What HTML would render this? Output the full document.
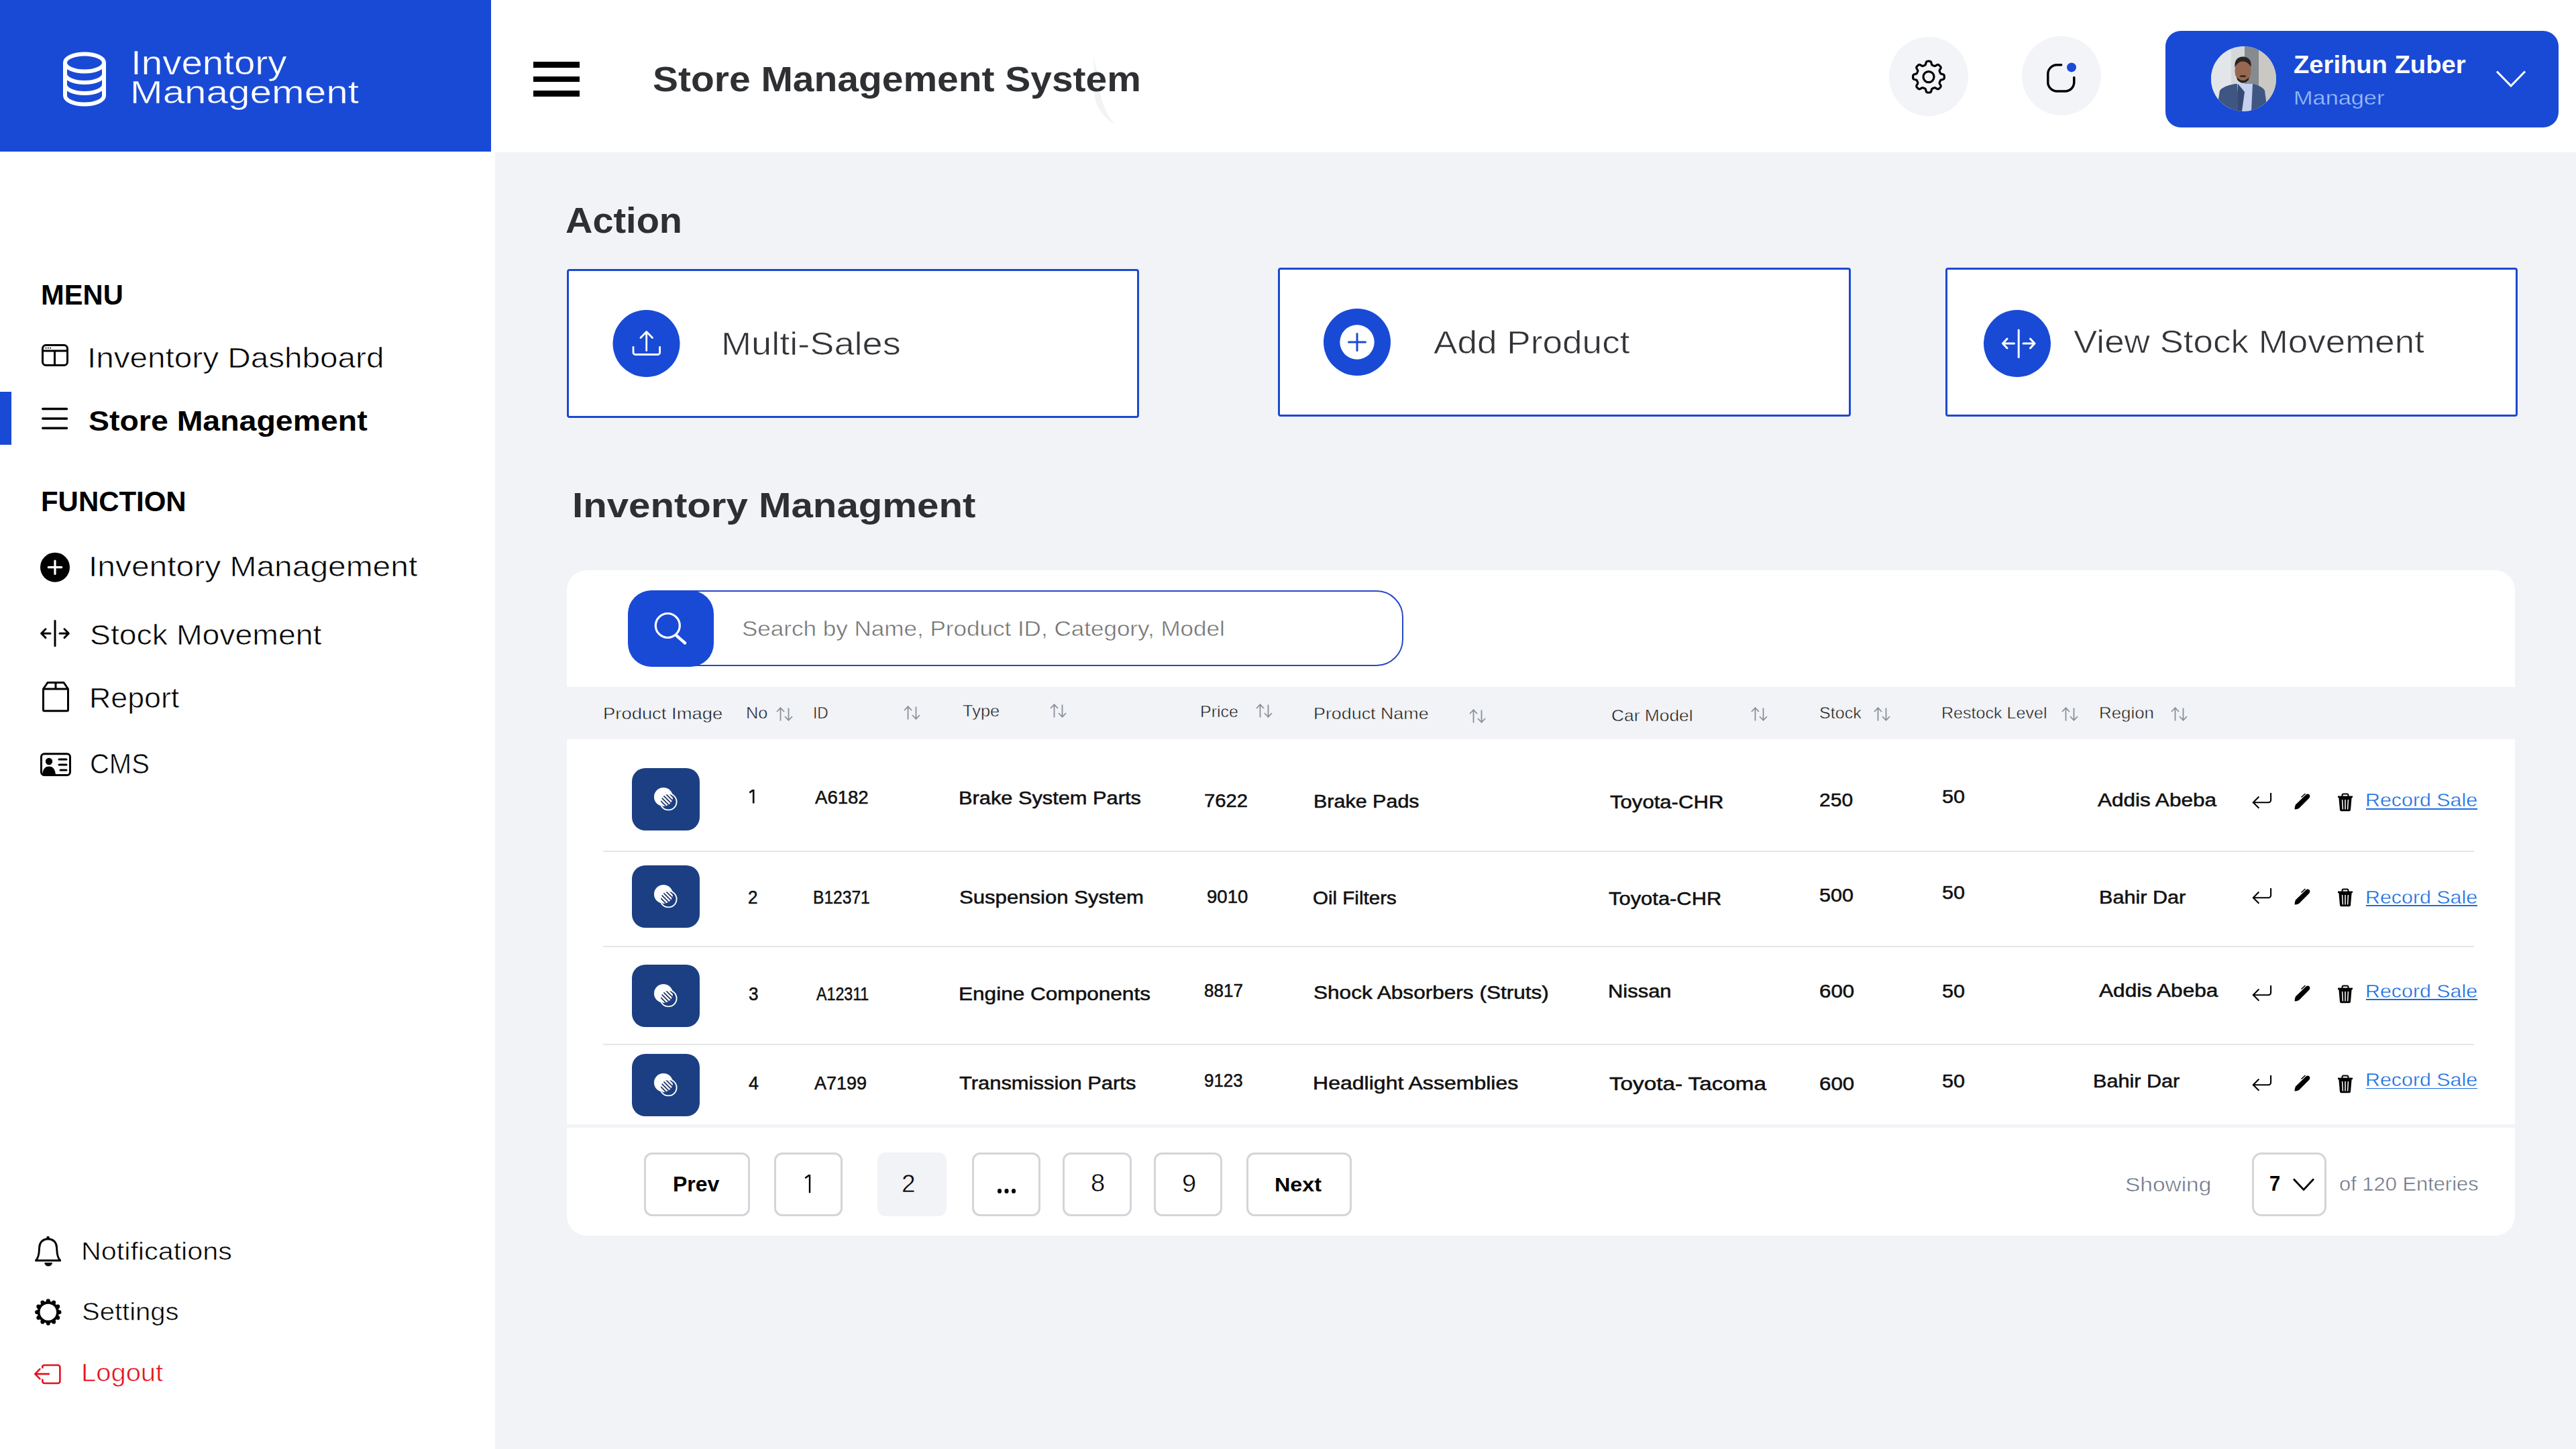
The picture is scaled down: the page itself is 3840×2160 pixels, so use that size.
<!DOCTYPE html>
<html><head><meta charset="utf-8"><title>Store Management System</title>
<style>
html,body{margin:0;padding:0;width:3840px;height:2160px;overflow:hidden;background:#fff;position:relative}
.r{position:absolute}
.t{position:absolute;z-index:2;white-space:pre;font-family:"Liberation Sans",sans-serif;transform-origin:0 0}
</style></head><body>
<div class="r" style="left:738px;top:227px;width:3102px;height:1933px;background:#f1f3f7"></div>
<div class="r" style="left:0;top:0;width:732px;height:226px;background:#194ad6"></div>
<svg class="r" style="left:90px;top:74px" width="72" height="88" viewBox="0 0 72 88">
<g fill="none" stroke="#fff" stroke-width="6">
<ellipse cx="36" cy="19.5" rx="29" ry="13"/>
<path d="M7 19.5 V68.5 A29 13 0 0 0 65 68.5 V19.5"/>
<path d="M7 36 A29 13 0 0 0 65 36"/>
<path d="M7 52 A29 13 0 0 0 65 52"/>
</g></svg>
<div class="t" style="left:194.56px;top:70.49px;font-size:49.75px;line-height:49.75px;color:#fff;transform:scaleX(1.1358);-webkit-text-stroke:0.5px #194ad6;">Inventory</div>
<div class="t" style="left:194.31px;top:113.23px;font-size:48.75px;line-height:48.75px;color:#fff;transform:scaleX(1.1979);-webkit-text-stroke:0.5px #194ad6;">Management</div>
<div class="r" style="left:795px;top:92px;width:69px;height:8.5px;background:#000"></div>
<div class="r" style="left:795px;top:113.5px;width:69px;height:8.5px;background:#000"></div>
<div class="r" style="left:795px;top:135px;width:69px;height:8.5px;background:#000"></div>
<div class="t" style="left:972.51px;top:92.47px;font-size:52.25px;line-height:52.25px;font-weight:700;color:#2e3033;transform:scaleX(1.0899);">Store Management System</div>
<div class="r" style="left:2816px;top:55px;width:118px;height:118px;border-radius:50%;background:#f2f4f7"></div>
<div class="r" style="left:3013.5px;top:53.5px;width:118px;height:118px;border-radius:50%;background:#f2f4f7"></div>
<svg class="r" style="left:2845px;top:85px" width="60" height="60" viewBox="0 0 60 60">
<path d="M53.40 29.60 L53.40 29.91 L53.39 30.21 L53.37 30.52 L53.34 30.82 L53.30 31.13 L53.25 31.43 L53.17 31.73 L53.07 32.02 L52.93 32.31 L52.74 32.59 L52.47 32.86 L52.10 33.10 L51.62 33.32 L51.04 33.50 L50.40 33.66 L49.76 33.80 L49.17 33.94 L48.69 34.09 L48.32 34.25 L48.03 34.43 L47.81 34.62 L47.64 34.83 L47.51 35.04 L47.39 35.25 L47.28 35.47 L47.18 35.69 L47.09 35.90 L47.00 36.12 L46.91 36.34 L46.81 36.56 L46.72 36.78 L46.63 37.01 L46.54 37.23 L46.45 37.45 L46.37 37.67 L46.29 37.90 L46.22 38.13 L46.17 38.38 L46.15 38.64 L46.17 38.93 L46.24 39.26 L46.39 39.64 L46.63 40.09 L46.94 40.60 L47.29 41.16 L47.64 41.72 L47.92 42.26 L48.10 42.75 L48.19 43.18 L48.19 43.56 L48.13 43.90 L48.03 44.20 L47.89 44.48 L47.73 44.74 L47.55 45.00 L47.37 45.24 L47.17 45.47 L46.97 45.70 L46.76 45.93 L46.55 46.15 L46.33 46.36 L46.10 46.57 L45.87 46.77 L45.64 46.97 L45.40 47.15 L45.14 47.33 L44.88 47.49 L44.60 47.63 L44.30 47.73 L43.96 47.79 L43.58 47.79 L43.15 47.70 L42.66 47.52 L42.12 47.24 L41.56 46.89 L41.00 46.54 L40.49 46.23 L40.04 45.99 L39.66 45.84 L39.33 45.77 L39.04 45.75 L38.78 45.77 L38.53 45.82 L38.30 45.89 L38.07 45.97 L37.85 46.05 L37.63 46.14 L37.41 46.23 L37.18 46.32 L36.96 46.41 L36.74 46.51 L36.52 46.60 L36.30 46.69 L36.09 46.78 L35.87 46.88 L35.65 46.99 L35.44 47.11 L35.23 47.24 L35.02 47.41 L34.83 47.63 L34.65 47.92 L34.49 48.29 L34.34 48.77 L34.20 49.36 L34.06 50.00 L33.90 50.64 L33.72 51.22 L33.50 51.70 L33.26 52.07 L32.99 52.34 L32.71 52.53 L32.42 52.67 L32.13 52.77 L31.83 52.85 L31.53 52.90 L31.22 52.94 L30.92 52.97 L30.61 52.99 L30.31 53.00 L30.00 53.00 L29.69 53.00 L29.39 52.99 L29.08 52.97 L28.78 52.94 L28.47 52.90 L28.17 52.85 L27.87 52.77 L27.58 52.67 L27.29 52.53 L27.01 52.34 L26.74 52.07 L26.50 51.70 L26.28 51.22 L26.10 50.64 L25.94 50.00 L25.80 49.36 L25.66 48.77 L25.51 48.29 L25.35 47.92 L25.17 47.63 L24.98 47.41 L24.77 47.24 L24.56 47.11 L24.35 46.99 L24.13 46.88 L23.91 46.78 L23.70 46.69 L23.48 46.60 L23.26 46.51 L23.04 46.41 L22.82 46.32 L22.59 46.23 L22.37 46.14 L22.15 46.05 L21.93 45.97 L21.70 45.89 L21.47 45.82 L21.22 45.77 L20.96 45.75 L20.67 45.77 L20.34 45.84 L19.96 45.99 L19.51 46.23 L19.00 46.54 L18.44 46.89 L17.88 47.24 L17.34 47.52 L16.85 47.70 L16.42 47.79 L16.04 47.79 L15.70 47.73 L15.40 47.63 L15.12 47.49 L14.86 47.33 L14.60 47.15 L14.36 46.97 L14.13 46.77 L13.90 46.57 L13.67 46.36 L13.45 46.15 L13.24 45.93 L13.03 45.70 L12.83 45.47 L12.63 45.24 L12.45 45.00 L12.27 44.74 L12.11 44.48 L11.97 44.20 L11.87 43.90 L11.81 43.56 L11.81 43.18 L11.90 42.75 L12.08 42.26 L12.36 41.72 L12.71 41.16 L13.06 40.60 L13.37 40.09 L13.61 39.64 L13.76 39.26 L13.83 38.93 L13.85 38.64 L13.83 38.38 L13.78 38.13 L13.71 37.90 L13.63 37.67 L13.55 37.45 L13.46 37.23 L13.37 37.01 L13.28 36.78 L13.19 36.56 L13.09 36.34 L13.00 36.12 L12.91 35.90 L12.82 35.69 L12.72 35.47 L12.61 35.25 L12.49 35.04 L12.36 34.83 L12.19 34.62 L11.97 34.43 L11.68 34.25 L11.31 34.09 L10.83 33.94 L10.24 33.80 L9.60 33.66 L8.96 33.50 L8.38 33.32 L7.90 33.10 L7.53 32.86 L7.26 32.59 L7.07 32.31 L6.93 32.02 L6.83 31.73 L6.75 31.43 L6.70 31.13 L6.66 30.82 L6.63 30.52 L6.61 30.21 L6.60 29.91 L6.60 29.60 L6.60 29.29 L6.61 28.99 L6.63 28.68 L6.66 28.38 L6.70 28.07 L6.75 27.77 L6.83 27.47 L6.93 27.18 L7.07 26.89 L7.26 26.61 L7.53 26.34 L7.90 26.10 L8.38 25.88 L8.96 25.70 L9.60 25.54 L10.24 25.40 L10.83 25.26 L11.31 25.11 L11.68 24.95 L11.97 24.77 L12.19 24.58 L12.36 24.37 L12.49 24.16 L12.61 23.95 L12.72 23.73 L12.82 23.51 L12.91 23.30 L13.00 23.08 L13.09 22.86 L13.19 22.64 L13.28 22.42 L13.37 22.19 L13.46 21.97 L13.55 21.75 L13.63 21.53 L13.71 21.30 L13.78 21.07 L13.83 20.82 L13.85 20.56 L13.83 20.27 L13.76 19.94 L13.61 19.56 L13.37 19.11 L13.06 18.60 L12.71 18.04 L12.36 17.48 L12.08 16.94 L11.90 16.45 L11.81 16.02 L11.81 15.64 L11.87 15.30 L11.97 15.00 L12.11 14.72 L12.27 14.46 L12.45 14.20 L12.63 13.96 L12.83 13.73 L13.03 13.50 L13.24 13.27 L13.45 13.05 L13.67 12.84 L13.90 12.63 L14.13 12.43 L14.36 12.23 L14.60 12.05 L14.86 11.87 L15.12 11.71 L15.40 11.57 L15.70 11.47 L16.04 11.41 L16.42 11.41 L16.85 11.50 L17.34 11.68 L17.88 11.96 L18.44 12.31 L19.00 12.66 L19.51 12.97 L19.96 13.21 L20.34 13.36 L20.67 13.43 L20.96 13.45 L21.22 13.43 L21.47 13.38 L21.70 13.31 L21.93 13.23 L22.15 13.15 L22.37 13.06 L22.59 12.97 L22.82 12.88 L23.04 12.79 L23.26 12.69 L23.48 12.60 L23.70 12.51 L23.91 12.42 L24.13 12.32 L24.35 12.21 L24.56 12.09 L24.77 11.96 L24.98 11.79 L25.17 11.57 L25.35 11.28 L25.51 10.91 L25.66 10.43 L25.80 9.84 L25.94 9.20 L26.10 8.56 L26.28 7.98 L26.50 7.50 L26.74 7.13 L27.01 6.86 L27.29 6.67 L27.58 6.53 L27.87 6.43 L28.17 6.35 L28.47 6.30 L28.78 6.26 L29.08 6.23 L29.39 6.21 L29.69 6.20 L30.00 6.20 L30.31 6.20 L30.61 6.21 L30.92 6.23 L31.22 6.26 L31.53 6.30 L31.83 6.35 L32.13 6.43 L32.42 6.53 L32.71 6.67 L32.99 6.86 L33.26 7.13 L33.50 7.50 L33.72 7.98 L33.90 8.56 L34.06 9.20 L34.20 9.84 L34.34 10.43 L34.49 10.91 L34.65 11.28 L34.83 11.57 L35.02 11.79 L35.23 11.96 L35.44 12.09 L35.65 12.21 L35.87 12.32 L36.09 12.42 L36.30 12.51 L36.52 12.60 L36.74 12.69 L36.96 12.79 L37.18 12.88 L37.41 12.97 L37.63 13.06 L37.85 13.15 L38.07 13.23 L38.30 13.31 L38.53 13.38 L38.78 13.43 L39.04 13.45 L39.33 13.43 L39.66 13.36 L40.04 13.21 L40.49 12.97 L41.00 12.66 L41.56 12.31 L42.12 11.96 L42.66 11.68 L43.15 11.50 L43.58 11.41 L43.96 11.41 L44.30 11.47 L44.60 11.57 L44.88 11.71 L45.14 11.87 L45.40 12.05 L45.64 12.23 L45.87 12.43 L46.10 12.63 L46.33 12.84 L46.55 13.05 L46.76 13.27 L46.97 13.50 L47.17 13.73 L47.37 13.96 L47.55 14.20 L47.73 14.46 L47.89 14.72 L48.03 15.00 L48.13 15.30 L48.19 15.64 L48.19 16.02 L48.10 16.45 L47.92 16.94 L47.64 17.48 L47.29 18.04 L46.94 18.60 L46.63 19.11 L46.39 19.56 L46.24 19.94 L46.17 20.27 L46.15 20.56 L46.17 20.82 L46.22 21.07 L46.29 21.30 L46.37 21.53 L46.45 21.75 L46.54 21.97 L46.63 22.19 L46.72 22.42 L46.81 22.64 L46.91 22.86 L47.00 23.08 L47.09 23.30 L47.18 23.51 L47.28 23.73 L47.39 23.95 L47.51 24.16 L47.64 24.37 L47.81 24.58 L48.03 24.77 L48.32 24.95 L48.69 25.11 L49.17 25.26 L49.76 25.40 L50.40 25.54 L51.04 25.70 L51.62 25.88 L52.10 26.10 L52.47 26.34 L52.74 26.61 L52.93 26.89 L53.07 27.18 L53.17 27.47 L53.25 27.77 L53.30 28.07 L53.34 28.38 L53.37 28.68 L53.39 28.99 L53.40 29.29 Z" fill="none" stroke="#000" stroke-width="3.2" stroke-linejoin="round"/>
<circle cx="30" cy="29.6" r="8" fill="none" stroke="#000" stroke-width="3.2"/></svg>
<svg class="r" style="left:1620px;top:80px" width="60" height="115" viewBox="0 0 60 115">
<path d="M10 6 Q12 40 11 60 Q14 88 42 106 Q22 80 20 55 Q18 30 10 6 Z" fill="#eef0f3" opacity="0.8"/></svg>
<svg class="r" style="left:3045px;top:90px" width="60" height="55" viewBox="0 0 60 55">
<path d="M27.7 6.8 H21 A13.5 13.5 0 0 0 7.8 20.3 V32.5 A13.5 13.5 0 0 0 21.3 46 H33.6 A13.5 13.5 0 0 0 46.8 32.5 V25.5" fill="none" stroke="#000" stroke-width="3.5" stroke-linecap="round"/>
<circle cx="43" cy="10.4" r="7" fill="#1b4ad6"/></svg>
<div class="r" style="left:3228px;top:46px;width:586px;height:144px;border-radius:23px;background:#194ad6"></div>
<svg class="r" style="left:3296px;top:69px" width="97" height="97" viewBox="0 0 97 97">
<defs><clipPath id="av"><circle cx="48.5" cy="48.5" r="48.5"/></clipPath></defs>
<g clip-path="url(#av)">
<rect width="97" height="97" fill="#d3d8da"/>
<rect x="0" y="0" width="30" height="97" fill="#e2e6e8"/>
<rect x="50" y="0" width="21" height="97" fill="#858b90"/>
<rect x="71" y="0" width="26" height="97" fill="#c9c8c3"/>
<path d="M8 97 L13 66 Q18 59 36 56 L62 56 Q76 59 80 66 L84 97 Z" fill="#3f5682"/>
<path d="M39 56 L62 56 L60 97 L42 97 Z" fill="#c5d1ee"/>
<path d="M40 56 L50 68 L46 97 L40 97 Z" fill="#344a74"/>
<ellipse cx="47.5" cy="37" rx="12" ry="16" fill="#96684f"/>
<path d="M35.5 32 Q34 16 47.5 15.5 Q61 16 59.5 31 Q55 22.5 47 22.5 Q39.5 22.5 35.5 32 Z" fill="#2a2422"/>
<path d="M38.5 46 Q47.5 56 56.5 46 L56 50 Q47.5 59.5 39 50 Z" fill="#2a2422"/>
<ellipse cx="47.5" cy="44.5" rx="5" ry="1.6" fill="#3a2a24"/>
</g></svg>
<div class="t" style="left:3418.97px;top:77.58px;font-size:37.00px;line-height:37.00px;font-weight:700;color:#fff;transform:scaleX(1.0315);">Zerihun Zuber</div>
<div class="t" style="left:3418.61px;top:130.60px;font-size:30.00px;line-height:30.00px;color:#96bdf6;transform:scaleX(1.1431);-webkit-text-stroke:0.35px #194ad6;">Manager</div>
<svg class="r" style="left:3719px;top:103px" width="48" height="30" viewBox="0 0 48 30">
<path d="M3 3.5 L24 25 L45 3.5" fill="none" stroke="#fff" stroke-width="3"/></svg>
<div class="t" style="left:61.49px;top:417.50px;font-size:43.00px;line-height:43.00px;font-weight:700;color:#000;transform:scaleX(0.9702);">MENU</div>
<svg class="r" style="left:60px;top:511px" width="44" height="38" viewBox="0 0 44 38">
<rect x="3.5" y="3.5" width="37" height="30" rx="5" fill="none" stroke="#000" stroke-width="3"/>
<path d="M3.5 12 H40.5 M21.5 12 V33.5" stroke="#000" stroke-width="3"/>
<circle cx="8.5" cy="7.8" r="1" fill="#000"/><circle cx="11.8" cy="7.8" r="1" fill="#000"/><circle cx="15.1" cy="7.8" r="1" fill="#000"/>
</svg>
<div class="t" style="left:130.34px;top:512.01px;font-size:42.75px;line-height:42.75px;color:#000;transform:scaleX(1.1149);-webkit-text-stroke:0.7px #fff;">Inventory Dashboard</div>
<div class="r" style="left:0;top:584px;width:17px;height:79px;background:#194ad6"></div>
<svg class="r" style="left:58px;top:600px" width="48" height="48" viewBox="0 0 48 48">
<path d="M5.8 9.6 H41.5 M5.8 24 H41.5 M5.8 38.3 H41.5" stroke="#000" stroke-width="3.5" stroke-linecap="round"/></svg>
<div class="t" style="left:132.32px;top:605.50px;font-size:43.00px;line-height:43.00px;font-weight:700;color:#000;transform:scaleX(1.0804);">Store Management</div>
<div class="t" style="left:61.27px;top:725.90px;font-size:43.00px;line-height:43.00px;font-weight:700;color:#000;transform:scaleX(0.9751);">FUNCTION</div>
<svg class="r" style="left:58px;top:822px" width="48" height="48" viewBox="0 0 48 48">
<circle cx="24" cy="23.7" r="22" fill="#000"/>
<path d="M24 14 V33.5 M14.3 23.7 H33.7" stroke="#fff" stroke-width="3.2" stroke-linecap="round"/></svg>
<div class="t" style="left:131.54px;top:823.35px;font-size:43.00px;line-height:43.00px;color:#000;transform:scaleX(1.1147);-webkit-text-stroke:0.7px #fff;">Inventory Management</div>
<svg class="r" style="left:58px;top:922px" width="50" height="44" viewBox="0 0 50 44">
<path d="M24 3.5 V40.8" stroke="#000" stroke-width="3" stroke-linecap="round"/>
<path d="M17 22.2 H4 M10 15.8 L3.6 22.2 L10 28.6" fill="none" stroke="#000" stroke-width="3" stroke-linecap="round" stroke-linejoin="round"/>
<path d="M31 22.2 H44 M38 15.8 L44.4 22.2 L38 28.6" fill="none" stroke="#000" stroke-width="3" stroke-linecap="round" stroke-linejoin="round"/></svg>
<div class="t" style="left:133.84px;top:924.55px;font-size:43.00px;line-height:43.00px;color:#000;transform:scaleX(1.0786);-webkit-text-stroke:0.7px #fff;">Stock Movement</div>
<svg class="r" style="left:60px;top:1014px" width="46" height="50" viewBox="0 0 46 50">
<path d="M4.5 13 L11 3.5 H35 L41.5 13 V44.2 A1.5 1.5 0 0 1 40 45.7 H6 A1.5 1.5 0 0 1 4.5 44.2 Z M4.5 13 H41.5 M23 3.5 V13" fill="none" stroke="#000" stroke-width="3" stroke-linejoin="round"/></svg>
<div class="t" style="left:132.88px;top:1018.85px;font-size:43.00px;line-height:43.00px;color:#000;transform:scaleX(1.0397);-webkit-text-stroke:0.7px #fff;">Report</div>
<svg class="r" style="left:58px;top:1120px" width="50" height="40" viewBox="0 0 50 40">
<rect x="3.5" y="3.8" width="43" height="31.8" rx="4.5" fill="none" stroke="#000" stroke-width="3"/>
<circle cx="15" cy="15" r="5.2" fill="#000"/>
<path d="M5 35.6 Q6 22.5 15 22.5 Q24 22.5 25 35.6 Z" fill="#000"/>
<path d="M30 12 H41 M30 20 H41 M32 28 H41" stroke="#000" stroke-width="3" stroke-linecap="round"/></svg>
<div class="t" style="left:134.14px;top:1116.85px;font-size:43.00px;line-height:43.00px;color:#000;transform:scaleX(0.9293);-webkit-text-stroke:0.7px #fff;">CMS</div>
<svg class="r" style="left:48px;top:1838px" width="48" height="54" viewBox="0 0 48 54">
<path d="M5.5 41 Q9.5 36.5 10.2 28 L10.6 22 Q11.2 9.8 23.6 8.8 Q36 9.8 36.6 22 L37 28 Q37.7 36.5 41.7 41" fill="none" stroke="#000" stroke-width="2.9" stroke-linejoin="round"/>
<circle cx="23.6" cy="7" r="2.3" fill="#000"/>
<path d="M4.3 41 H42.9" stroke="#000" stroke-width="3"/>
<path d="M18.2 44.2 A5.9 5.3 0 0 0 30 44.2 Z" fill="#000"/></svg>
<div class="t" style="left:120.51px;top:1848.00px;font-size:36.50px;line-height:36.50px;color:#000;transform:scaleX(1.1308);-webkit-text-stroke:0.6px #fff;">Notifications</div>
<svg class="r" style="left:48px;top:1932px" width="48" height="48" viewBox="0 0 48 48">
<circle cx="23.8" cy="24" r="16.2" fill="#000"/><circle cx="23.80" cy="7.40" r="3.1" fill="#000"/><circle cx="32.10" cy="9.62" r="3.1" fill="#000"/><circle cx="38.18" cy="15.70" r="3.1" fill="#000"/><circle cx="40.40" cy="24.00" r="3.1" fill="#000"/><circle cx="38.18" cy="32.30" r="3.1" fill="#000"/><circle cx="32.10" cy="38.38" r="3.1" fill="#000"/><circle cx="23.80" cy="40.60" r="3.1" fill="#000"/><circle cx="15.50" cy="38.38" r="3.1" fill="#000"/><circle cx="9.42" cy="32.30" r="3.1" fill="#000"/><circle cx="7.20" cy="24.00" r="3.1" fill="#000"/><circle cx="9.42" cy="15.70" r="3.1" fill="#000"/><circle cx="15.50" cy="9.62" r="3.1" fill="#000"/>
<circle cx="23.8" cy="24" r="12.3" fill="#fff"/></svg>
<div class="t" style="left:121.68px;top:1938.43px;font-size:36.00px;line-height:36.00px;color:#000;transform:scaleX(1.1110);-webkit-text-stroke:0.6px #fff;">Settings</div>
<svg class="r" style="left:48px;top:2028px" width="48" height="40" viewBox="0 0 48 40">
<path d="M15.3 11.7 V9 A3 3 0 0 1 18.3 7 H38.4 A3 3 0 0 1 41.4 10 V31 A3 3 0 0 1 38.4 34 H18.3 A3 3 0 0 1 15.3 31 V27.7" fill="none" stroke="#e3121c" stroke-width="2.6" stroke-linejoin="round"/>
<path d="M25 20.1 H4.5 M11.4 12.8 L4.3 20.1 L11.4 27.4" fill="none" stroke="#e3121c" stroke-width="2.6" stroke-linecap="round" stroke-linejoin="round"/></svg>
<div class="t" style="left:121.07px;top:2028.73px;font-size:36.00px;line-height:36.00px;color:#e3121c;transform:scaleX(1.1093);-webkit-text-stroke:0.6px #fff;">Logout</div>
<div class="t" style="left:843.15px;top:301.82px;font-size:53.25px;line-height:53.25px;font-weight:700;color:#2d2f33;transform:scaleX(1.0500);">Action</div>
<div class="r" style="left:845px;top:401px;width:853px;height:222px;box-sizing:border-box;border:3.5px solid #1d49cf;border-radius:4px;background:#fff"></div>
<div class="r" style="left:1905px;top:399px;width:854px;height:221.5px;box-sizing:border-box;border:3.5px solid #1d49cf;border-radius:4px;background:#fff"></div>
<div class="r" style="left:2899.5px;top:399px;width:853.0px;height:221.5px;box-sizing:border-box;border:3.5px solid #1d49cf;border-radius:4px;background:#fff"></div>
<svg class="r" style="left:913px;top:462px" width="101" height="101" viewBox="0 0 101 101">
<circle cx="50.5" cy="50" r="50" fill="#194ad6"/>
<path d="M50.7 60.5 V33 M42 41.5 L50.7 32.5 L59.5 41.5 M31 55.3 V63.5 A3 3 0 0 0 34 66.5 H67.6 A3 3 0 0 0 70.6 63.5 V55.3" fill="none" stroke="#fff" stroke-width="2.8" stroke-linecap="round" stroke-linejoin="round"/></svg>
<div class="t" style="left:1075.08px;top:487.82px;font-size:49.00px;line-height:49.00px;color:#333438;transform:scaleX(1.1051);-webkit-text-stroke:0.7px #fff;">Multi-Sales</div>
<svg class="r" style="left:1972px;top:459px" width="102" height="102" viewBox="0 0 102 102">
<circle cx="51" cy="51" r="50" fill="#194ad6"/><circle cx="51" cy="51" r="25.7" fill="#fff"/>
<path d="M51 38.6 V63.5 M38.5 51 H63.5" stroke="#194ad6" stroke-width="3" stroke-linecap="round"/></svg>
<div class="t" style="left:2137.40px;top:485.94px;font-size:48.50px;line-height:48.50px;color:#333438;transform:scaleX(1.0959);-webkit-text-stroke:0.7px #fff;">Add Product</div>
<svg class="r" style="left:2956px;top:461px" width="102" height="102" viewBox="0 0 102 102">
<circle cx="51" cy="51" r="50" fill="#194ad6"/>
<path d="M53.2 31 V71.5" stroke="#fff" stroke-width="3" stroke-linecap="round"/>
<path d="M46.5 51 H30 M36 44 L29.5 51 L36 58" fill="none" stroke="#fff" stroke-width="3" stroke-linecap="round" stroke-linejoin="round"/>
<path d="M60 51 H76.5 M70.5 44 L77 51 L70.5 58" fill="none" stroke="#fff" stroke-width="3" stroke-linecap="round" stroke-linejoin="round"/></svg>
<div class="t" style="left:3090.70px;top:485.44px;font-size:48.50px;line-height:48.50px;color:#333438;transform:scaleX(1.0919);-webkit-text-stroke:0.7px #fff;">View Stock Movement</div>
<div class="t" style="left:853.28px;top:727.26px;font-size:52.50px;line-height:52.50px;font-weight:700;color:#2d2f33;transform:scaleX(1.1082);">Inventory Managment</div>
<div class="r" style="left:845px;top:850px;width:2904px;height:174px;background:#fff;border-radius:30px 30px 0 0"></div>
<div class="r" style="left:936px;top:880px;width:1156px;height:113px;box-sizing:border-box;border:2px solid #2748c4;border-radius:40px;background:#fff"></div>
<div class="r" style="left:936px;top:880px;width:128px;height:114px;border-radius:35px;background:#194ad6"></div>
<svg class="r" style="left:966px;top:903px" width="66" height="66" viewBox="0 0 66 66">
<circle cx="29.3" cy="29.5" r="18" fill="none" stroke="#fff" stroke-width="3.2"/>
<path d="M43 45 L55 55.5" stroke="#fff" stroke-width="4.5" stroke-linecap="round"/></svg>
<div class="t" style="left:1105.70px;top:921.92px;font-size:31.75px;line-height:31.75px;color:#737373;transform:scaleX(1.1035);-webkit-text-stroke:0.5px #fff;">Search by Name, Product ID, Category, Model</div>
<div class="r" style="left:845px;top:1101.5px;width:2904px;height:574.5px;background:#fff"></div>
<div class="r" style="left:845px;top:1681px;width:2904px;height:161px;background:#fff;border-radius:0 0 30px 30px"></div>
<div class="t" style="left:898.62px;top:1051.58px;font-size:24.00px;line-height:24.00px;color:#111;transform:scaleX(1.1418);-webkit-text-stroke:0.5px #f1f3f7;">Product Image</div>
<div class="t" style="left:1111.69px;top:1050.53px;font-size:24.00px;line-height:24.00px;color:#111;transform:scaleX(1.0536);-webkit-text-stroke:0.5px #f1f3f7;">No</div>
<div class="t" style="left:1211.70px;top:1051.13px;font-size:24.00px;line-height:24.00px;color:#111;transform:scaleX(0.9476);-webkit-text-stroke:0.5px #f1f3f7;">ID</div>
<div class="t" style="left:1434.50px;top:1047.78px;font-size:24.00px;line-height:24.00px;color:#111;transform:scaleX(1.0608);-webkit-text-stroke:0.5px #f1f3f7;">Type</div>
<div class="t" style="left:1789.42px;top:1048.58px;font-size:24.00px;line-height:24.00px;color:#111;transform:scaleX(1.0423);-webkit-text-stroke:0.5px #f1f3f7;">Price</div>
<div class="t" style="left:1958.16px;top:1052.43px;font-size:24.00px;line-height:24.00px;color:#111;transform:scaleX(1.1185);-webkit-text-stroke:0.5px #f1f3f7;">Product Name</div>
<div class="t" style="left:2402.40px;top:1055.33px;font-size:24.00px;line-height:24.00px;color:#111;transform:scaleX(1.0982);-webkit-text-stroke:0.5px #f1f3f7;">Car Model</div>
<div class="t" style="left:2712.35px;top:1051.48px;font-size:24.00px;line-height:24.00px;color:#111;transform:scaleX(1.0458);-webkit-text-stroke:0.5px #f1f3f7;">Stock</div>
<div class="t" style="left:2894.11px;top:1051.48px;font-size:24.00px;line-height:24.00px;color:#111;transform:scaleX(1.0446);-webkit-text-stroke:0.5px #f1f3f7;">Restock Level</div>
<div class="t" style="left:3128.84px;top:1050.78px;font-size:24.00px;line-height:24.00px;color:#111;transform:scaleX(1.0781);-webkit-text-stroke:0.5px #f1f3f7;">Region</div>
<svg class="r" style="left:1157.4px;top:1053.5px" width="26" height="22" viewBox="0 0 26 22"><path d="M6.5 20.5 V1.5 M1 7 L6.5 1.2 L12 7 M18.5 1.5 V19.5 M13 14 L18.5 19.8 L24 14" fill="none" stroke="#8b9099" stroke-width="1.8"/></svg>
<svg class="r" style="left:1346.7px;top:1052.3px" width="26" height="22" viewBox="0 0 26 22"><path d="M6.5 20.5 V1.5 M1 7 L6.5 1.2 L12 7 M18.5 1.5 V19.5 M13 14 L18.5 19.8 L24 14" fill="none" stroke="#8b9099" stroke-width="1.8"/></svg>
<svg class="r" style="left:1564.7px;top:1048.6px" width="26" height="22" viewBox="0 0 26 22"><path d="M6.5 20.5 V1.5 M1 7 L6.5 1.2 L12 7 M18.5 1.5 V19.5 M13 14 L18.5 19.8 L24 14" fill="none" stroke="#8b9099" stroke-width="1.8"/></svg>
<svg class="r" style="left:1872.2px;top:1049.2px" width="26" height="22" viewBox="0 0 26 22"><path d="M6.5 20.5 V1.5 M1 7 L6.5 1.2 L12 7 M18.5 1.5 V19.5 M13 14 L18.5 19.8 L24 14" fill="none" stroke="#8b9099" stroke-width="1.8"/></svg>
<svg class="r" style="left:2189.5px;top:1056.7px" width="26" height="22" viewBox="0 0 26 22"><path d="M6.5 20.5 V1.5 M1 7 L6.5 1.2 L12 7 M18.5 1.5 V19.5 M13 14 L18.5 19.8 L24 14" fill="none" stroke="#8b9099" stroke-width="1.8"/></svg>
<svg class="r" style="left:2610.3px;top:1053.5px" width="26" height="22" viewBox="0 0 26 22"><path d="M6.5 20.5 V1.5 M1 7 L6.5 1.2 L12 7 M18.5 1.5 V19.5 M13 14 L18.5 19.8 L24 14" fill="none" stroke="#8b9099" stroke-width="1.8"/></svg>
<svg class="r" style="left:2793px;top:1053.5px" width="26" height="22" viewBox="0 0 26 22"><path d="M6.5 20.5 V1.5 M1 7 L6.5 1.2 L12 7 M18.5 1.5 V19.5 M13 14 L18.5 19.8 L24 14" fill="none" stroke="#8b9099" stroke-width="1.8"/></svg>
<svg class="r" style="left:3072.6px;top:1053.5px" width="26" height="22" viewBox="0 0 26 22"><path d="M6.5 20.5 V1.5 M1 7 L6.5 1.2 L12 7 M18.5 1.5 V19.5 M13 14 L18.5 19.8 L24 14" fill="none" stroke="#8b9099" stroke-width="1.8"/></svg>
<svg class="r" style="left:3236px;top:1053.5px" width="26" height="22" viewBox="0 0 26 22"><path d="M6.5 20.5 V1.5 M1 7 L6.5 1.2 L12 7 M18.5 1.5 V19.5 M13 14 L18.5 19.8 L24 14" fill="none" stroke="#8b9099" stroke-width="1.8"/></svg>
<div class="r" style="left:942px;top:1145px;width:100.5px;height:92.5px;border-radius:20px;background:#1b3f82"></div>
<svg class="r" style="left:942px;top:1145px" width="100" height="92" viewBox="0 0 100 92">
<defs><clipPath id="a1145"><circle cx="47" cy="42.9" r="14"/></clipPath><clipPath id="b1145"><circle cx="54.4" cy="50.2" r="12"/></clipPath></defs>
<circle cx="47" cy="42.9" r="14" fill="#fff"/>
<g clip-path="url(#a1145)"><g clip-path="url(#b1145)" stroke="#1b2f66" stroke-width="1.7">
<path d="M30 36 L58 64 M33 33 L61 61 M36 30 L64 58 M39 27 L67 55 M42 24 L70 52 M45 21 L73 49 M27 39 L55 67"/></g></g>
<circle cx="54.4" cy="50.2" r="12.2" fill="none" stroke="#fff" stroke-width="1.9"/>
</svg>
<div class="r" style="left:942px;top:1290px;width:100.5px;height:92.5px;border-radius:20px;background:#1b3f82"></div>
<svg class="r" style="left:942px;top:1290px" width="100" height="92" viewBox="0 0 100 92">
<defs><clipPath id="a1290"><circle cx="47" cy="42.9" r="14"/></clipPath><clipPath id="b1290"><circle cx="54.4" cy="50.2" r="12"/></clipPath></defs>
<circle cx="47" cy="42.9" r="14" fill="#fff"/>
<g clip-path="url(#a1290)"><g clip-path="url(#b1290)" stroke="#1b2f66" stroke-width="1.7">
<path d="M30 36 L58 64 M33 33 L61 61 M36 30 L64 58 M39 27 L67 55 M42 24 L70 52 M45 21 L73 49 M27 39 L55 67"/></g></g>
<circle cx="54.4" cy="50.2" r="12.2" fill="none" stroke="#fff" stroke-width="1.9"/>
</svg>
<div class="r" style="left:942px;top:1438.2px;width:100.5px;height:92.5px;border-radius:20px;background:#1b3f82"></div>
<svg class="r" style="left:942px;top:1438.2px" width="100" height="92" viewBox="0 0 100 92">
<defs><clipPath id="a1438"><circle cx="47" cy="42.9" r="14"/></clipPath><clipPath id="b1438"><circle cx="54.4" cy="50.2" r="12"/></clipPath></defs>
<circle cx="47" cy="42.9" r="14" fill="#fff"/>
<g clip-path="url(#a1438)"><g clip-path="url(#b1438)" stroke="#1b2f66" stroke-width="1.7">
<path d="M30 36 L58 64 M33 33 L61 61 M36 30 L64 58 M39 27 L67 55 M42 24 L70 52 M45 21 L73 49 M27 39 L55 67"/></g></g>
<circle cx="54.4" cy="50.2" r="12.2" fill="none" stroke="#fff" stroke-width="1.9"/>
</svg>
<div class="r" style="left:942px;top:1571px;width:100.5px;height:92.5px;border-radius:20px;background:#1b3f82"></div>
<svg class="r" style="left:942px;top:1571px" width="100" height="92" viewBox="0 0 100 92">
<defs><clipPath id="a1571"><circle cx="47" cy="42.9" r="14"/></clipPath><clipPath id="b1571"><circle cx="54.4" cy="50.2" r="12"/></clipPath></defs>
<circle cx="47" cy="42.9" r="14" fill="#fff"/>
<g clip-path="url(#a1571)"><g clip-path="url(#b1571)" stroke="#1b2f66" stroke-width="1.7">
<path d="M30 36 L58 64 M33 33 L61 61 M36 30 L64 58 M39 27 L67 55 M42 24 L70 52 M45 21 L73 49 M27 39 L55 67"/></g></g>
<circle cx="54.4" cy="50.2" r="12.2" fill="none" stroke="#fff" stroke-width="1.9"/>
</svg>
<div class="r" style="left:899px;top:1268px;width:2789px;height:2px;background:#e3e5e9"></div>
<div class="r" style="left:899px;top:1410px;width:2789px;height:2px;background:#e3e5e9"></div>
<div class="r" style="left:899px;top:1556.3px;width:2789px;height:2px;background:#e3e5e9"></div>
<svg class="r" style="left:1115.5px;top:1177.1999999999998px" width="10" height="23" viewBox="0 0 10 23"><path d="M1.3 4.6 L6.2 1 H7.2 V20.5" fill="none" stroke="#111" stroke-width="2.7"/></svg>
<div class="t" style="left:1214.80px;top:1173.79px;font-size:28.25px;line-height:28.25px;color:#111;transform:scaleX(0.9753);-webkit-text-stroke:0.55px #111;">A6182</div>
<div class="t" style="left:1428.82px;top:1175.19px;font-size:28.25px;line-height:28.25px;color:#111;transform:scaleX(1.0891);-webkit-text-stroke:0.55px #111;">Brake System Parts</div>
<div class="t" style="left:1794.96px;top:1178.54px;font-size:28.25px;line-height:28.25px;color:#111;transform:scaleX(1.0361);-webkit-text-stroke:0.55px #111;">7622</div>
<div class="t" style="left:1958.44px;top:1179.94px;font-size:28.25px;line-height:28.25px;color:#111;transform:scaleX(1.0790);-webkit-text-stroke:0.55px #111;">Brake Pads</div>
<div class="t" style="left:2399.70px;top:1180.94px;font-size:28.25px;line-height:28.25px;color:#111;transform:scaleX(1.1007);-webkit-text-stroke:0.55px #111;">Toyota-CHR</div>
<div class="t" style="left:2712.24px;top:1177.59px;font-size:28.25px;line-height:28.25px;color:#111;transform:scaleX(1.0630);-webkit-text-stroke:0.55px #111;">250</div>
<div class="t" style="left:2895.22px;top:1172.79px;font-size:28.25px;line-height:28.25px;color:#111;transform:scaleX(1.0833);-webkit-text-stroke:0.55px #111;">50</div>
<div class="t" style="left:3127.00px;top:1177.94px;font-size:28.25px;line-height:28.25px;color:#111;transform:scaleX(1.1157);-webkit-text-stroke:0.55px #111;">Addis Abeba</div>
<div class="t" style="left:1114.88px;top:1323.44px;font-size:28.25px;line-height:28.25px;color:#111;transform:scaleX(0.9214);-webkit-text-stroke:0.55px #111;">2</div>
<div class="t" style="left:1211.96px;top:1323.44px;font-size:28.25px;line-height:28.25px;color:#111;transform:scaleX(0.8702);-webkit-text-stroke:0.55px #111;">B12371</div>
<div class="t" style="left:1430.10px;top:1323.44px;font-size:28.25px;line-height:28.25px;color:#111;transform:scaleX(1.1008);-webkit-text-stroke:0.55px #111;">Suspension System</div>
<div class="t" style="left:1798.72px;top:1322.04px;font-size:28.25px;line-height:28.25px;color:#111;transform:scaleX(0.9754);-webkit-text-stroke:0.55px #111;">9010</div>
<div class="t" style="left:1957.25px;top:1323.99px;font-size:28.25px;line-height:28.25px;color:#111;transform:scaleX(1.0458);-webkit-text-stroke:0.55px #111;">Oil Filters</div>
<div class="t" style="left:2397.80px;top:1324.84px;font-size:28.25px;line-height:28.25px;color:#111;transform:scaleX(1.0941);-webkit-text-stroke:0.55px #111;">Toyota-CHR</div>
<div class="t" style="left:2712.22px;top:1320.49px;font-size:28.25px;line-height:28.25px;color:#111;transform:scaleX(1.0804);-webkit-text-stroke:0.55px #111;">500</div>
<div class="t" style="left:2895.22px;top:1316.44px;font-size:28.25px;line-height:28.25px;color:#111;transform:scaleX(1.0833);-webkit-text-stroke:0.55px #111;">50</div>
<div class="t" style="left:3129.13px;top:1323.04px;font-size:28.25px;line-height:28.25px;color:#111;transform:scaleX(1.0829);-webkit-text-stroke:0.55px #111;">Bahir Dar</div>
<div class="t" style="left:1116.28px;top:1467.14px;font-size:28.25px;line-height:28.25px;color:#111;transform:scaleX(0.9214);-webkit-text-stroke:0.55px #111;">3</div>
<div class="t" style="left:1217.40px;top:1467.14px;font-size:28.25px;line-height:28.25px;color:#111;transform:scaleX(0.8213);-webkit-text-stroke:0.55px #111;">A12311</div>
<div class="t" style="left:1428.97px;top:1467.14px;font-size:28.25px;line-height:28.25px;color:#111;transform:scaleX(1.1170);-webkit-text-stroke:0.55px #111;">Engine Components</div>
<div class="t" style="left:1795.08px;top:1462.34px;font-size:28.25px;line-height:28.25px;color:#111;transform:scaleX(0.9213);-webkit-text-stroke:0.55px #111;">8817</div>
<div class="t" style="left:1958.28px;top:1465.34px;font-size:28.25px;line-height:28.25px;color:#111;transform:scaleX(1.1173);-webkit-text-stroke:0.55px #111;">Shock Absorbers (Struts)</div>
<div class="t" style="left:2396.61px;top:1463.09px;font-size:28.25px;line-height:28.25px;color:#111;transform:scaleX(1.0952);-webkit-text-stroke:0.55px #111;">Nissan</div>
<div class="t" style="left:2712.19px;top:1463.09px;font-size:28.25px;line-height:28.25px;color:#111;transform:scaleX(1.1065);-webkit-text-stroke:0.55px #111;">600</div>
<div class="t" style="left:2895.22px;top:1463.09px;font-size:28.25px;line-height:28.25px;color:#111;transform:scaleX(1.0833);-webkit-text-stroke:0.55px #111;">50</div>
<div class="t" style="left:3128.70px;top:1462.44px;font-size:28.25px;line-height:28.25px;color:#111;transform:scaleX(1.1182);-webkit-text-stroke:0.55px #111;">Addis Abeba</div>
<div class="t" style="left:1115.80px;top:1600.34px;font-size:28.25px;line-height:28.25px;color:#111;transform:scaleX(0.9533);-webkit-text-stroke:0.55px #111;">4</div>
<div class="t" style="left:1213.70px;top:1600.34px;font-size:28.25px;line-height:28.25px;color:#111;transform:scaleX(0.9531);-webkit-text-stroke:0.55px #111;">A7199</div>
<div class="t" style="left:1430.30px;top:1600.34px;font-size:28.25px;line-height:28.25px;color:#111;transform:scaleX(1.0942);-webkit-text-stroke:0.55px #111;">Transmission Parts</div>
<div class="t" style="left:1795.08px;top:1595.69px;font-size:28.25px;line-height:28.25px;color:#111;transform:scaleX(0.9180);-webkit-text-stroke:0.55px #111;">9123</div>
<div class="t" style="left:1957.13px;top:1600.24px;font-size:28.25px;line-height:28.25px;color:#111;transform:scaleX(1.1341);-webkit-text-stroke:0.55px #111;">Headlight Assemblies</div>
<div class="t" style="left:2398.80px;top:1601.14px;font-size:28.25px;line-height:28.25px;color:#111;transform:scaleX(1.1764);-webkit-text-stroke:0.55px #111;">Toyota- Tacoma</div>
<div class="t" style="left:2712.19px;top:1600.84px;font-size:28.25px;line-height:28.25px;color:#111;transform:scaleX(1.1065);-webkit-text-stroke:0.55px #111;">600</div>
<div class="t" style="left:2895.22px;top:1596.84px;font-size:28.25px;line-height:28.25px;color:#111;transform:scaleX(1.0833);-webkit-text-stroke:0.55px #111;">50</div>
<div class="t" style="left:3119.93px;top:1596.69px;font-size:28.25px;line-height:28.25px;color:#111;transform:scaleX(1.0838);-webkit-text-stroke:0.55px #111;">Bahir Dar</div>
<div class="t" style="left:3526.39px;top:1179.42px;font-size:27.50px;line-height:27.50px;color:#1a6de0;transform:scaleX(1.1041);-webkit-text-stroke:0.4px #fff;">Record Sale</div>
<div class="r" style="left:3527.2px;top:1204.9px;width:165.5px;height:1.9px;background:#1a6de0"></div>
<svg class="r" style="left:3355px;top:1180.1px" width="34" height="30" viewBox="0 0 34 30">
<path d="M30.1 2 V12.7 A3.5 3.5 0 0 1 26.6 16.2 H3.8 M12.4 7.6 L3.8 16.2 L12.4 24.8" fill="none" stroke="#000" stroke-width="2.1" stroke-linejoin="miter"/></svg>
<svg class="r" style="left:3418px;top:1179.6px" width="28" height="30" viewBox="0 0 28 30">
<path d="M4 19.5 L19 5 Q22 2.5 24.5 4.5 Q26.5 7 24 10 L9 25 Q6 26.5 2.5 26.5 Q2.5 23 4 19.5 Z" fill="#000"/>
<path d="M12.5 8.5 L18.5 3" stroke="#000" stroke-width="1.6"/></svg>
<svg class="r" style="left:3483px;top:1180.6px" width="26" height="32" viewBox="0 0 26 32">
<path d="M8.5 6 V4.5 Q8.5 2.5 10.5 2.5 H15.5 Q17.5 2.5 17.5 4.5 V6" fill="none" stroke="#000" stroke-width="2"/>
<path d="M2 5.6 H24 V8.1 H2 Z" fill="#000"/>
<path d="M3.4 8 H22.6 L21 26.5 Q20.8 28.2 18.8 28.2 H7.2 Q5.2 28.2 5 26.5 Z" fill="#000"/>
<path d="M8.6 11 L9.4 25.5 M13 11 V25.5 M17.4 11 L16.6 25.5" stroke="#fff" stroke-width="1.5"/></svg>
<div class="t" style="left:3526.39px;top:1323.62px;font-size:27.50px;line-height:27.50px;color:#1a6de0;transform:scaleX(1.1041);-webkit-text-stroke:0.4px #fff;">Record Sale</div>
<div class="r" style="left:3527.2px;top:1349.1000000000001px;width:165.5px;height:1.9px;background:#1a6de0"></div>
<svg class="r" style="left:3355px;top:1322.2px" width="34" height="30" viewBox="0 0 34 30">
<path d="M30.1 2 V12.7 A3.5 3.5 0 0 1 26.6 16.2 H3.8 M12.4 7.6 L3.8 16.2 L12.4 24.8" fill="none" stroke="#000" stroke-width="2.1" stroke-linejoin="miter"/></svg>
<svg class="r" style="left:3418px;top:1321.7px" width="28" height="30" viewBox="0 0 28 30">
<path d="M4 19.5 L19 5 Q22 2.5 24.5 4.5 Q26.5 7 24 10 L9 25 Q6 26.5 2.5 26.5 Q2.5 23 4 19.5 Z" fill="#000"/>
<path d="M12.5 8.5 L18.5 3" stroke="#000" stroke-width="1.6"/></svg>
<svg class="r" style="left:3483px;top:1322.7px" width="26" height="32" viewBox="0 0 26 32">
<path d="M8.5 6 V4.5 Q8.5 2.5 10.5 2.5 H15.5 Q17.5 2.5 17.5 4.5 V6" fill="none" stroke="#000" stroke-width="2"/>
<path d="M2 5.6 H24 V8.1 H2 Z" fill="#000"/>
<path d="M3.4 8 H22.6 L21 26.5 Q20.8 28.2 18.8 28.2 H7.2 Q5.2 28.2 5 26.5 Z" fill="#000"/>
<path d="M8.6 11 L9.4 25.5 M13 11 V25.5 M17.4 11 L16.6 25.5" stroke="#fff" stroke-width="1.5"/></svg>
<div class="t" style="left:3526.39px;top:1463.77px;font-size:27.50px;line-height:27.50px;color:#1a6de0;transform:scaleX(1.1041);-webkit-text-stroke:0.4px #fff;">Record Sale</div>
<div class="r" style="left:3527.2px;top:1489.25px;width:165.5px;height:1.9px;background:#1a6de0"></div>
<svg class="r" style="left:3355px;top:1466.5px" width="34" height="30" viewBox="0 0 34 30">
<path d="M30.1 2 V12.7 A3.5 3.5 0 0 1 26.6 16.2 H3.8 M12.4 7.6 L3.8 16.2 L12.4 24.8" fill="none" stroke="#000" stroke-width="2.1" stroke-linejoin="miter"/></svg>
<svg class="r" style="left:3418px;top:1466.0px" width="28" height="30" viewBox="0 0 28 30">
<path d="M4 19.5 L19 5 Q22 2.5 24.5 4.5 Q26.5 7 24 10 L9 25 Q6 26.5 2.5 26.5 Q2.5 23 4 19.5 Z" fill="#000"/>
<path d="M12.5 8.5 L18.5 3" stroke="#000" stroke-width="1.6"/></svg>
<svg class="r" style="left:3483px;top:1467.0px" width="26" height="32" viewBox="0 0 26 32">
<path d="M8.5 6 V4.5 Q8.5 2.5 10.5 2.5 H15.5 Q17.5 2.5 17.5 4.5 V6" fill="none" stroke="#000" stroke-width="2"/>
<path d="M2 5.6 H24 V8.1 H2 Z" fill="#000"/>
<path d="M3.4 8 H22.6 L21 26.5 Q20.8 28.2 18.8 28.2 H7.2 Q5.2 28.2 5 26.5 Z" fill="#000"/>
<path d="M8.6 11 L9.4 25.5 M13 11 V25.5 M17.4 11 L16.6 25.5" stroke="#fff" stroke-width="1.5"/></svg>
<div class="t" style="left:3526.39px;top:1596.02px;font-size:27.50px;line-height:27.50px;color:#1a6de0;transform:scaleX(1.1041);-webkit-text-stroke:0.4px #fff;">Record Sale</div>
<div class="r" style="left:3527.2px;top:1621.5px;width:165.5px;height:1.9px;background:#1a6de0"></div>
<svg class="r" style="left:3355px;top:1600.9px" width="34" height="30" viewBox="0 0 34 30">
<path d="M30.1 2 V12.7 A3.5 3.5 0 0 1 26.6 16.2 H3.8 M12.4 7.6 L3.8 16.2 L12.4 24.8" fill="none" stroke="#000" stroke-width="2.1" stroke-linejoin="miter"/></svg>
<svg class="r" style="left:3418px;top:1600.4px" width="28" height="30" viewBox="0 0 28 30">
<path d="M4 19.5 L19 5 Q22 2.5 24.5 4.5 Q26.5 7 24 10 L9 25 Q6 26.5 2.5 26.5 Q2.5 23 4 19.5 Z" fill="#000"/>
<path d="M12.5 8.5 L18.5 3" stroke="#000" stroke-width="1.6"/></svg>
<svg class="r" style="left:3483px;top:1601.4px" width="26" height="32" viewBox="0 0 26 32">
<path d="M8.5 6 V4.5 Q8.5 2.5 10.5 2.5 H15.5 Q17.5 2.5 17.5 4.5 V6" fill="none" stroke="#000" stroke-width="2"/>
<path d="M2 5.6 H24 V8.1 H2 Z" fill="#000"/>
<path d="M3.4 8 H22.6 L21 26.5 Q20.8 28.2 18.8 28.2 H7.2 Q5.2 28.2 5 26.5 Z" fill="#000"/>
<path d="M8.6 11 L9.4 25.5 M13 11 V25.5 M17.4 11 L16.6 25.5" stroke="#fff" stroke-width="1.5"/></svg>
<div class="r" style="left:960px;top:1717.5px;width:158px;height:95.5px;box-sizing:border-box;border:3px solid #d4d5d9;border-radius:12px;background:#fff"></div>
<div class="r" style="left:1153.5px;top:1717.5px;width:102.5px;height:95.5px;box-sizing:border-box;border:3px solid #d4d5d9;border-radius:12px;background:#fff"></div>
<div class="r" style="left:1308px;top:1717.5px;width:102.59999999999991px;height:95.5px;border-radius:12px;background:#f1f3f7"></div>
<div class="r" style="left:1449.3px;top:1717.5px;width:102.0px;height:95.5px;box-sizing:border-box;border:3px solid #d4d5d9;border-radius:12px;background:#fff"></div>
<div class="r" style="left:1584.4px;top:1717.5px;width:102.5px;height:95.5px;box-sizing:border-box;border:3px solid #d4d5d9;border-radius:12px;background:#fff"></div>
<div class="r" style="left:1720.4px;top:1717.5px;width:101.59999999999991px;height:95.5px;box-sizing:border-box;border:3px solid #d4d5d9;border-radius:12px;background:#fff"></div>
<div class="r" style="left:1857.8px;top:1717.5px;width:157.5px;height:95.5px;box-sizing:border-box;border:3px solid #d4d5d9;border-radius:12px;background:#fff"></div>
<div class="t" style="left:1003.24px;top:1749.86px;font-size:31.00px;line-height:31.00px;font-weight:700;color:#000;transform:scaleX(1.0323);">Prev</div>
<svg class="r" style="left:1199px;top:1751px" width="10" height="28" viewBox="0 0 10 28"><path d="M1.2 5.2 L6.6 1.2 H8 V27.2" fill="none" stroke="#000" stroke-width="2.4" stroke-linejoin="miter"/></svg>
<div class="t" style="left:1343.78px;top:1746.70px;font-size:36.50px;line-height:36.50px;color:#000;transform:scaleX(1.0118);-webkit-text-stroke:0.5px #f1f3f7;">2</div>
<div class="r" style="left:1486.6px;top:1772px;width:6.5px;height:6.5px;border-radius:50%;background:#000;box-shadow:10.5px 0 0 #000, 21px 0 0 #000"></div>
<div class="t" style="left:1625.96px;top:1746.09px;font-size:36.75px;line-height:36.75px;color:#000;transform:scaleX(1.0389);-webkit-text-stroke:0.5px #fff;">8</div>
<div class="t" style="left:1761.97px;top:1746.08px;font-size:37.00px;line-height:37.00px;color:#000;transform:scaleX(1.0278);-webkit-text-stroke:0.5px #fff;">9</div>
<div class="t" style="left:1900.46px;top:1750.59px;font-size:30.25px;line-height:30.25px;font-weight:700;color:#000;transform:scaleX(1.0688);">Next</div>
<div class="t" style="left:3168.27px;top:1750.63px;font-size:29.50px;line-height:29.50px;color:#6b7585;transform:scaleX(1.1333);-webkit-text-stroke:0.5px #fff;">Showing</div>
<div class="r" style="left:3357px;top:1717.5px;width:111px;height:95.5px;box-sizing:border-box;border:3px solid #d4d5d9;border-radius:14px;background:#fff"></div>
<div class="t" style="left:3383.38px;top:1749.22px;font-size:31.75px;line-height:31.75px;font-weight:700;color:#000;transform:scaleX(0.9187);">7</div>
<svg class="r" style="left:3416px;top:1754px" width="36" height="24" viewBox="0 0 36 24">
<path d="M3 3.5 L18 19.5 L33 3.5" fill="none" stroke="#000" stroke-width="2.8"/></svg>
<div class="t" style="left:3487.06px;top:1750.42px;font-size:29.75px;line-height:29.75px;color:#6b7585;transform:scaleX(1.0374);-webkit-text-stroke:0.5px #fff;">of 120 Enteries</div>
</body></html>
